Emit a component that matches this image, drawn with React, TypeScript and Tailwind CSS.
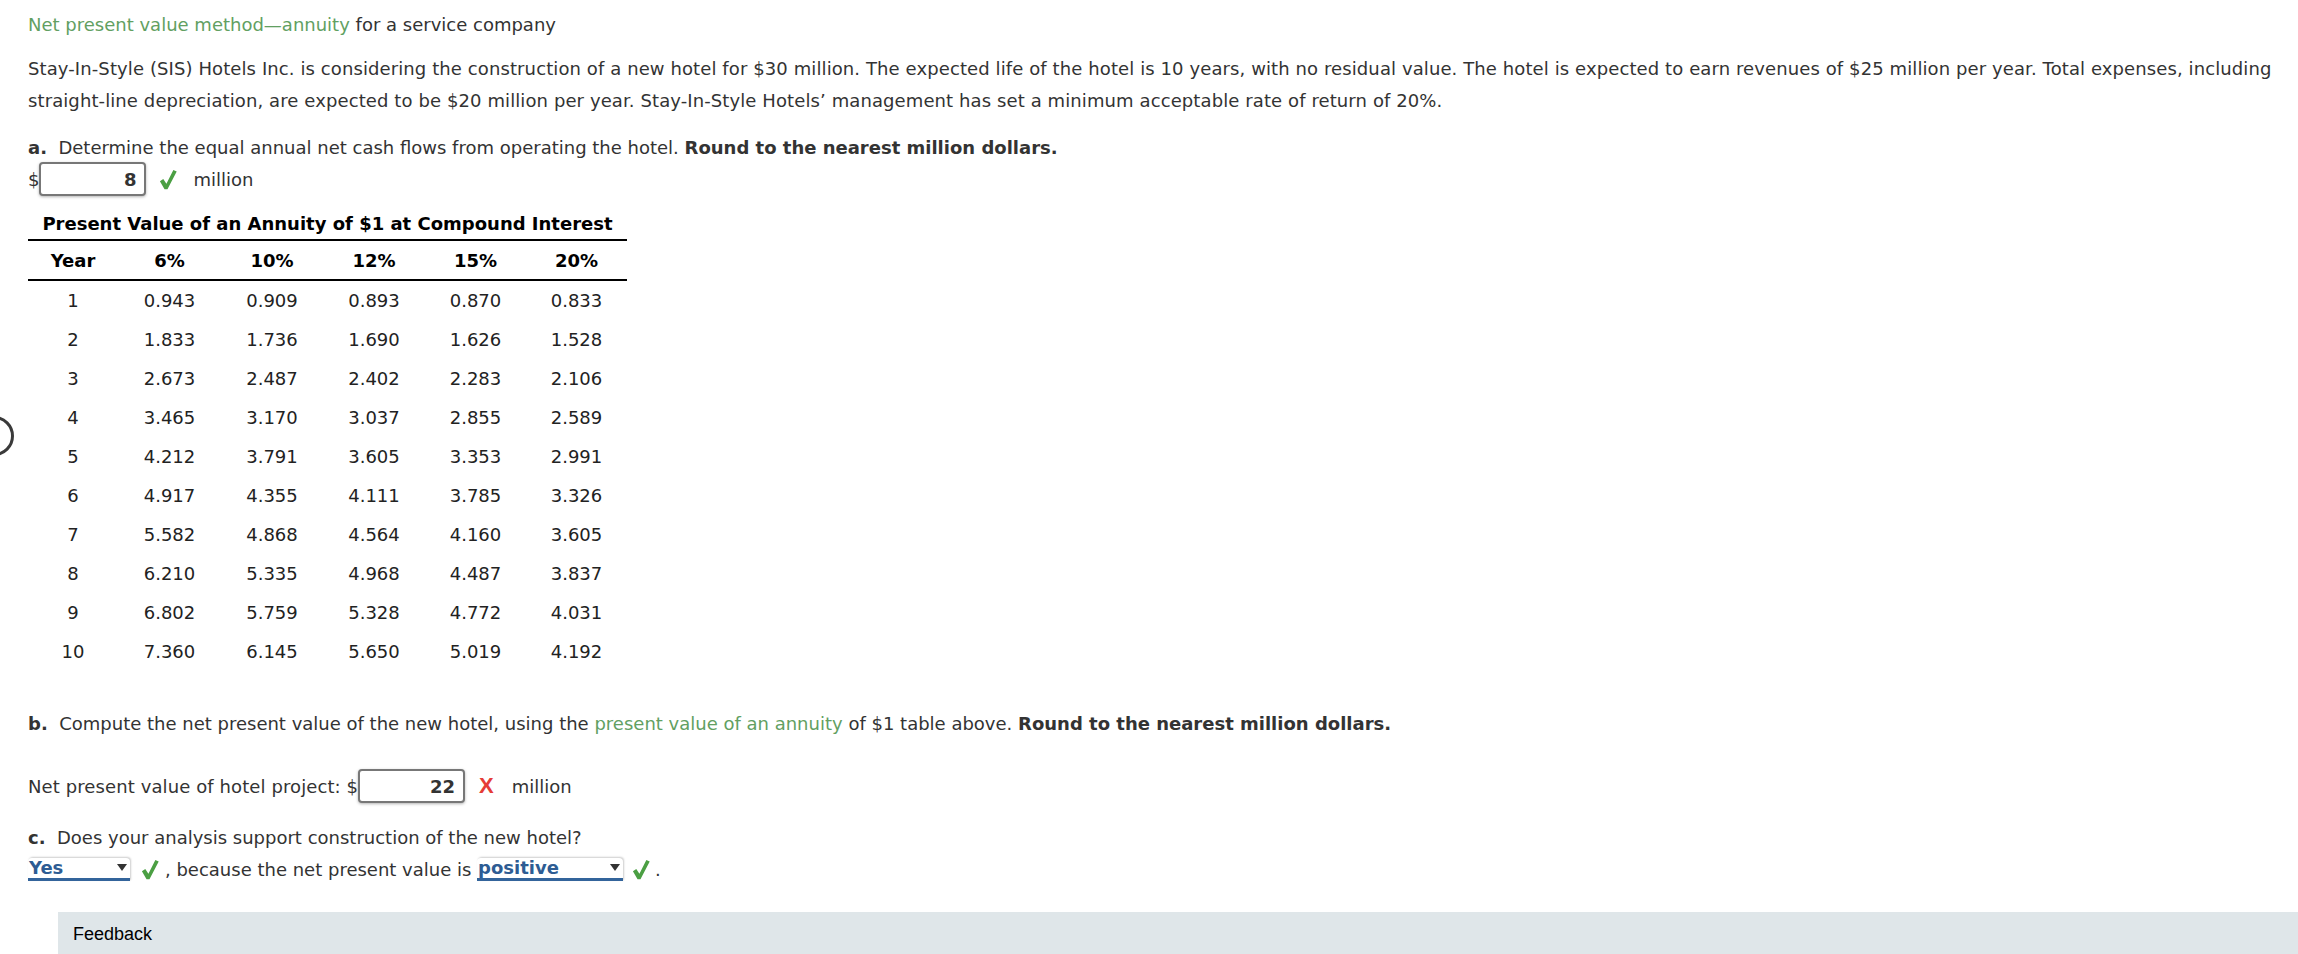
import type { ReactNode } from 'react';

const rows: [number, string, string, string, string, string][] = [
  [1, '0.943', '0.909', '0.893', '0.870', '0.833'],
  [2, '1.833', '1.736', '1.690', '1.626', '1.528'],
  [3, '2.673', '2.487', '2.402', '2.283', '2.106'],
  [4, '3.465', '3.170', '3.037', '2.855', '2.589'],
  [5, '4.212', '3.791', '3.605', '3.353', '2.991'],
  [6, '4.917', '4.355', '4.111', '3.785', '3.326'],
  [7, '5.582', '4.868', '4.564', '4.160', '3.605'],
  [8, '6.210', '5.335', '4.968', '4.487', '3.837'],
  [9, '6.802', '5.759', '5.328', '4.772', '4.031'],
  [10, '7.360', '6.145', '5.650', '5.019', '4.192'],
];

const headers = ['Year', '6%', '10%', '12%', '15%', '20%'];
const gridCls = 'grid grid-cols-[90px_103px_102px_102px_101px_101px]';

function Check() {
  return (
    <svg className="h-[21px] w-[18px] flex-shrink-0" viewBox="0 0 17 20">
      <path d="M0.8 11.6 L4 9.6 L7 14 L13.6 1 L16.8 2.4 L8 19.2 L5.2 19.2 Z" fill="#4b9f43" />
    </svg>
  );
}

function AnswerBox({ value }: { value: string }) {
  return (
    <div className="flex h-[34px] w-[107px] items-center justify-end rounded-[4px] border-2 border-[#777] bg-white pr-[8px] font-bold text-[#333] shadow-[0_1px_3px_rgba(0,0,0,0.3)]">
      {value}
    </div>
  );
}

function Dropdown({ label, width }: { label: string; width: string }) {
  return (
    <div
      className={`flex h-[23px] items-center justify-between rounded-t-[4px] border-b-[3px] border-[#33649b] bg-white pl-[1px] pr-[3px] shadow-[1px_-1px_2px_rgba(0,0,0,0.2)] ${width}`}>
      <span className="font-bold leading-none text-[#2d5c93]">{label}</span>
      <svg className="h-[8px] w-[10px]" viewBox="0 0 10 8">
        <path d="M0 0 L10 0 L5 7 Z" fill="#333" />
      </svg>
    </div>
  );
}

function Line({ children, className = '' }: { children: ReactNode; className?: string }) {
  return <div className={`leading-[24px] ${className}`}>{children}</div>;
}

export default function App() {
  return (
    <div className="relative h-[954px] overflow-hidden bg-white font-['DejaVu_Sans',Verdana,sans-serif] text-[18px] text-[#333]">
      {/* partially hidden nav button on the left edge */}
      <div className="absolute left-[-26px] top-[416px] h-[40px] w-[40px] rounded-full border-[3px] border-[#3a3a3a]" />

      <div className="pl-[28px] pr-[10px] pt-[13px]">
        <Line>
          <span className="text-[#629f62]">Net present value method—annuity</span> for a service company
        </Line>

        <p className="mt-[16px] leading-[32px] tracking-[0.1px]">
          Stay-In-Style (SIS) Hotels Inc. is considering the construction of a new hotel for $30 million. The expected
          life of the hotel is 10 years, with no residual value. The hotel is expected to earn revenues of $25 million
          per year. Total expenses, including straight-line depreciation, are expected to be $20 million per year.
          Stay-In-Style Hotels’ management has set a minimum acceptable rate of return of 20%.
        </p>

        <Line className="mt-[19px]">
          <span className="font-bold">a.</span>&nbsp; Determine the equal annual net cash flows from operating the
          hotel. <span className="font-bold">Round to the nearest million dollars.</span>
        </Line>

        <div className="mt-[2px] flex items-center">
          <span>$</span>
          <AnswerBox value="8" />
          <span className="ml-[13px]">
            <Check />
          </span>
          <span className="ml-[16px]">million</span>
        </div>

        {/* Present value table */}
        <div className="mt-[16px] w-[599px]">
          <div className="border-b-2 border-black pb-[3px] text-center font-bold leading-[24px] text-black">
            Present Value of an Annuity of $1 at Compound Interest
          </div>
          <div className={`${gridCls} h-[40px] items-center border-b-2 border-black font-bold text-black`}>
            {headers.map(h => (
              <div key={h} className="text-center">
                {h}
              </div>
            ))}
          </div>
          {rows.map(r => (
            <div key={r[0]} className={`${gridCls} h-[39px] items-center text-[#222]`}>
              {r.map((c, i) => (
                <div key={i} className="text-center">
                  {c}
                </div>
              ))}
            </div>
          ))}
        </div>

        <Line className="mt-[41px]">
          <span className="font-bold">b.</span>&nbsp; Compute the net present value of the new hotel, using the{' '}
          <span className="text-[#629f62]">present value of an annuity</span> of $1 table above.{' '}
          <span className="font-bold">Round to the nearest million dollars.</span>
        </Line>

        <div className="mt-[33px] flex items-center">
          <span className="tracking-[0.1px]">Net present value of hotel project: $</span>
          <AnswerBox value="22" />
          <span className="ml-[14px] font-['Liberation_Sans',Arial,sans-serif] text-[22px] font-bold leading-none text-[#e53c36]">
            X
          </span>
          <span className="ml-[18px]">million</span>
        </div>

        <Line className="mt-[23px]">
          <span className="font-bold">c.</span>&nbsp; Does your analysis support construction of the new hotel?
        </Line>

        <div className="mt-[7px] flex h-[24px] items-center">
          <Dropdown label="Yes" width="w-[102px]" />
          <span className="ml-[11px]">
            <Check />
          </span>
          <span className="ml-[6px]">, because the net present value is&nbsp;</span>
          <Dropdown label="positive" width="w-[146px]" />
          <span className="ml-[9px]">
            <Check />
          </span>
          <span className="ml-[5px]">.</span>
        </div>
      </div>

      <div className="ml-[58px] mt-[31px] h-[60px] bg-[#dfe6e9] pl-[15px] pt-[10px] font-['Liberation_Sans',Arial,sans-serif] text-[18px] leading-[24px] text-black">
        Feedback
      </div>
    </div>
  );
}
